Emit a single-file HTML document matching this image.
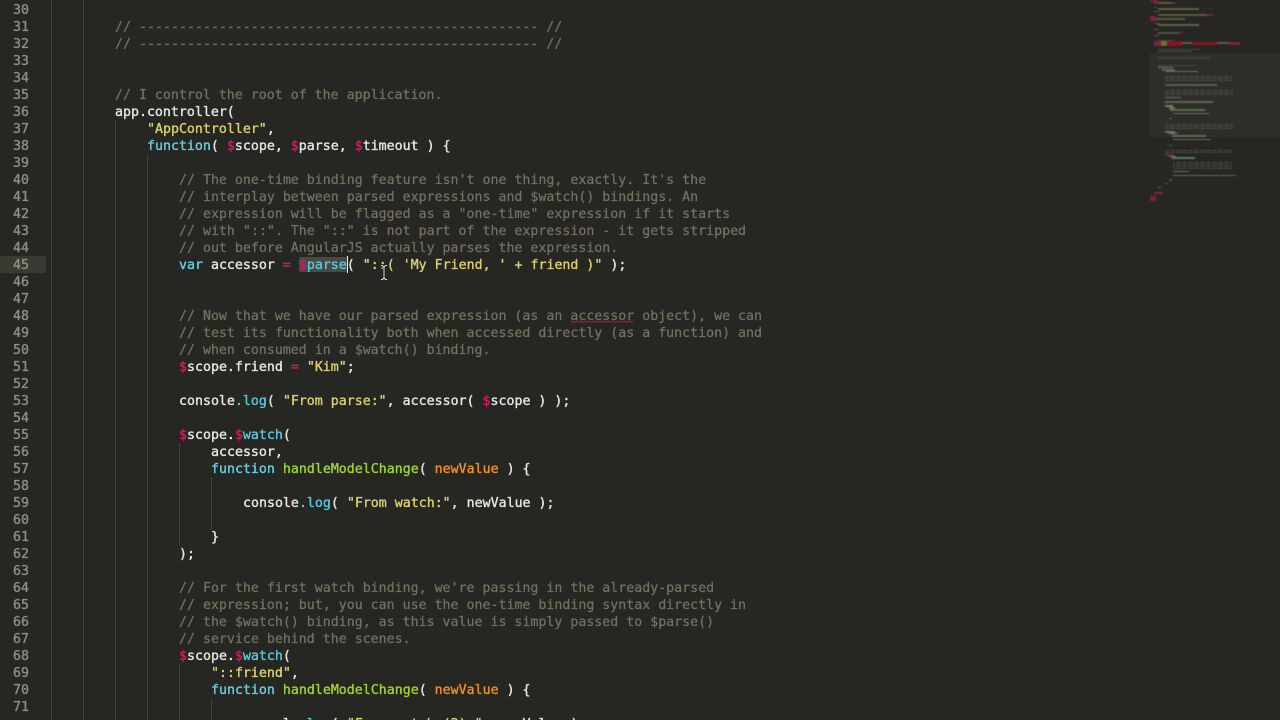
<!DOCTYPE html>
<html><head><meta charset="utf-8"><style>
html,body{margin:0;padding:0;background:#262622;width:1280px;height:720px;overflow:hidden}
#e{position:relative;width:1280px;height:720px;overflow:hidden;font-family:"DejaVu Sans Mono","Liberation Mono",monospace;font-size:13.28px;line-height:17px;color:#e8e8e2;filter:blur(.35px)}
.l{position:absolute;left:115px;white-space:pre;height:17px;transform:translateY(1px);-webkit-text-stroke:.35px}
.n{position:absolute;left:0;width:29px;text-align:right;color:#8f8f88;height:17px;transform:translateY(1px);-webkit-text-stroke:.35px}
.g{position:absolute;width:1px;background:#41413c}
.c{color:#75715e;-webkit-text-stroke:.25px}.k{color:#66d0e4}.s{color:#dcd070}.d{color:#d41a66}.f{color:#9ed62e}.o{color:#f0921f}.y{color:#d41a66}.m{color:#5cc8dc}
</style></head><body><div id="e">
<div style="position:absolute;left:0;top:256px;width:46px;height:17px;background:#3a3a32"></div>
<div class="g" style="left:51px;top:0;height:720px"></div>
<div class="g" style="left:83px;top:0;height:720px"></div>
<div class="g" style="left:115px;top:120px;height:600px"></div>
<div class="g" style="left:147px;top:154px;height:566px"></div>
<div class="g" style="left:179px;top:443px;height:103px"></div>
<div class="g" style="left:211px;top:477px;height:52px"></div>
<div class="g" style="left:179px;top:664px;height:56px"></div>
<div class="g" style="left:211px;top:698px;height:22px"></div>
<div style="position:absolute;left:299px;top:257px;width:48px;height:15px;background:#4a4a45;border-radius:2px"></div>
<div style="position:absolute;left:347px;top:256px;width:1px;height:17px;background:#f0f0ea"></div>
<div class="n" style="top:1px">30</div>
<div class="n" style="top:18px">31</div>
<div class="n" style="top:35px">32</div>
<div class="n" style="top:52px">33</div>
<div class="n" style="top:69px">34</div>
<div class="n" style="top:86px">35</div>
<div class="n" style="top:103px">36</div>
<div class="n" style="top:120px">37</div>
<div class="n" style="top:137px">38</div>
<div class="n" style="top:154px">39</div>
<div class="n" style="top:171px">40</div>
<div class="n" style="top:188px">41</div>
<div class="n" style="top:205px">42</div>
<div class="n" style="top:222px">43</div>
<div class="n" style="top:239px">44</div>
<div class="n" style="top:256px">45</div>
<div class="n" style="top:273px">46</div>
<div class="n" style="top:290px">47</div>
<div class="n" style="top:307px">48</div>
<div class="n" style="top:324px">49</div>
<div class="n" style="top:341px">50</div>
<div class="n" style="top:358px">51</div>
<div class="n" style="top:375px">52</div>
<div class="n" style="top:392px">53</div>
<div class="n" style="top:409px">54</div>
<div class="n" style="top:426px">55</div>
<div class="n" style="top:443px">56</div>
<div class="n" style="top:460px">57</div>
<div class="n" style="top:477px">58</div>
<div class="n" style="top:494px">59</div>
<div class="n" style="top:511px">60</div>
<div class="n" style="top:528px">61</div>
<div class="n" style="top:545px">62</div>
<div class="n" style="top:562px">63</div>
<div class="n" style="top:579px">64</div>
<div class="n" style="top:596px">65</div>
<div class="n" style="top:613px">66</div>
<div class="n" style="top:630px">67</div>
<div class="n" style="top:647px">68</div>
<div class="n" style="top:664px">69</div>
<div class="n" style="top:681px">70</div>
<div class="n" style="top:698px">71</div>
<div class="l c" style="top:18px">// -------------------------------------------------- //</div>
<div class="l c" style="top:35px">// -------------------------------------------------- //</div>
<div class="l c" style="top:86px">// I control the root of the application.</div>
<div class="l" style="top:103px">app.controller(</div>
<div class="l s" style="left:147px;top:120px">"AppController"<span style="color:#e8e8e2">,</span></div>
<div class="l" style="left:147px;top:137px"><span class="k">function</span>( <span class="d">$</span>scope, <span class="d">$</span>parse, <span class="d">$</span>timeout ) {</div>
<div class="l c" style="left:179px;top:171px">// The one-time binding feature isn't one thing, exactly. It's the</div>
<div class="l c" style="left:179px;top:188px">// interplay between parsed expressions and $watch() bindings. An</div>
<div class="l c" style="left:179px;top:205px">// expression will be flagged as a "one-time" expression if it starts</div>
<div class="l c" style="left:179px;top:222px">// with "::". The "::" is not part of the expression - it gets stripped</div>
<div class="l c" style="left:179px;top:239px">// out before AngularJS actually parses the expression.</div>
<div class="l" style="left:179px;top:256px"><span class="k">var</span> accessor <span class="y">=</span> <span class="d">$</span><span class="m">parse</span>( <span class="s">"::( 'My Friend, ' + friend )"</span> );</div>
<div class="l c" style="left:179px;top:307px">// Now that we have our parsed expression (as an accessor object), we can</div>
<div class="l c" style="left:179px;top:324px">// test its functionality both when accessed directly (as a function) and</div>
<div class="l c" style="left:179px;top:341px">// when consumed in a $watch() binding.</div>
<div class="l" style="left:179px;top:358px"><span class="d">$</span>scope.friend <span class="y">=</span> <span class="s">"Kim"</span>;</div>
<div class="l" style="left:179px;top:392px">console<span class="m">.log</span>( <span class="s">"From parse:"</span>, accessor( <span class="d">$</span>scope ) );</div>
<div class="l" style="left:179px;top:426px"><span class="d">$</span>scope.<span class="d">$</span><span class="m">watch</span>(</div>
<div class="l" style="left:211px;top:443px">accessor,</div>
<div class="l" style="left:211px;top:460px"><span class="k">function</span> <span class="f">handleModelChange</span>( <span class="o">newValue</span> ) {</div>
<div class="l" style="left:243px;top:494px">console<span class="m">.log</span>( <span class="s">"From watch:"</span>, newValue );</div>
<div class="l" style="left:211px;top:528px">}</div>
<div class="l" style="left:179px;top:545px">);</div>
<div class="l c" style="left:179px;top:579px">// For the first watch binding, we're passing in the already-parsed</div>
<div class="l c" style="left:179px;top:596px">// expression; but, you can use the one-time binding syntax directly in</div>
<div class="l c" style="left:179px;top:613px">// the $watch() binding, as this value is simply passed to $parse()</div>
<div class="l c" style="left:179px;top:630px">// service behind the scenes.</div>
<div class="l" style="left:179px;top:647px"><span class="d">$</span>scope.<span class="d">$</span><span class="m">watch</span>(</div>
<div class="l s" style="left:211px;top:664px">"::friend"<span style="color:#e8e8e2">,</span></div>
<div class="l" style="left:211px;top:681px"><span class="k">function</span> <span class="f">handleModelChange</span>( <span class="o">newValue</span> ) {</div>
<div class="l" style="left:243px;top:715px">console<span class="m">.log</span>( <span class="s">"From watch (2):"</span>, newValue );</div>
<svg style="position:absolute;left:0;top:0" width="1280" height="720" fill="none">
<defs><pattern id="r" width="6" height="2" patternUnits="userSpaceOnUse"><rect width="5" height="1" fill="#5c5c50"/></pattern></defs>
<path d="M571 322.5l2-1.5 2 1.5 2-1.5 2 1.5 2-1.5 2 1.5 2-1.5 2 1.5 2-1.5 2 1.5 2-1.5 2 1.5 2-1.5 2 1.5 2-1.5 2 1.5 2-1.5 2 1.5 2-1.5 2 1.5 2-1.5 2 1.5 2-1.5 2 1.5 2-1.5 2 1.5 2-1.5 2 1.5 2-1.5 2 1.5 2-1.5" stroke="#a0203c" stroke-width="1"/>
<path d="M381 265.5c1.500 0 2.500 .5 3 1.500c.5-1 1.500-1.500 3-1.500M384 267v11M381 279.500c1.500 0 2.500-.5 3-1.500c.5 1 1.500 1.500 3 1.500" stroke="#111" stroke-width="2.400"/>
<path d="M381 265.500c1.500 0 2.500 .5 3 1.500c.5-1 1.500-1.500 3-1.500M384 267v11M381 279.500c1.500 0 2.500-.5 3-1.500c.5 1 1.500 1.500 3 1.500" stroke="#f4f4f4" stroke-width="1"/>
<rect x="1150" y="53" width="130" height="84" fill="#2d2d29"/>
<g opacity=".72" style="filter:blur(.6px)">
<rect x="1150" y="0" width="8" height="2" fill="#a02050"/>
<rect x="1154" y="2" width="22" height="2" fill="#707038"/><rect x="1154" y="2" width="4" height="2" fill="#a02050"/><rect x="1172" y="2" width="4" height="2" fill="#a02050"/>
<rect x="1154" y="7" width="3" height="1" fill="#666"/>
<rect x="1158" y="8" width="41" height="2" fill="#77775a"/>
<rect x="1154" y="11" width="6" height="1" fill="#666"/>
<rect x="1158" y="14" width="50" height="2" fill="#707045"/><rect x="1207" y="14" width="6" height="2" fill="#a02050"/>
<rect x="1150" y="16" width="6" height="5" fill="#a02050"/>
<rect x="1156" y="18" width="29" height="2" fill="#707045"/>
<rect x="1154" y="23" width="6" height="1" fill="#666"/>
<rect x="1158" y="24" width="41" height="2" fill="#77775a"/>
<rect x="1154" y="29" width="5" height="1" fill="#666"/>
<rect x="1158" y="32" width="20" height="2" fill="#666650"/><rect x="1178" y="32" width="4" height="2" fill="#a02050"/>
<rect x="1154" y="35" width="5" height="1" fill="#666"/>
<rect x="1158" y="40" width="16" height="1" fill="#555548"/>
<rect x="1154" y="41" width="7" height="5" fill="#a02050"/>
<rect x="1161" y="41" width="6" height="5" fill="#85903a"/>
<rect x="1167" y="41" width="15" height="5" fill="#a81020"/>
<rect x="1182" y="42" width="10" height="2" fill="#77775a"/>
<rect x="1192" y="42" width="25" height="3" fill="#a81020"/>
<rect x="1217" y="42" width="11" height="2" fill="#77775a"/>
<rect x="1228" y="42" width="12" height="3" fill="#a02050"/>
<rect x="1158" y="49" width="42" height="1" fill="#555548"/>
<rect x="1158" y="51" width="34" height="1" fill="#666650"/>
<rect x="1158" y="57" width="52" height="2" fill="#4a4a40"/>
<rect x="1158" y="65" width="38" height="1" fill="#55554a"/>
<rect x="1158" y="67" width="15" height="1" fill="#999"/>
<rect x="1162" y="69" width="13" height="2" fill="#808040"/>
<rect x="1166" y="71" width="32" height="1" fill="#888"/>
<rect x="1165" y="75" width="67" height="7" fill="url(#r)"/>
<rect x="1165" y="84" width="52" height="2" fill="#707058"/>
<rect x="1165" y="90" width="68" height="5" fill="url(#r)"/>
<rect x="1212" y="90" width="8" height="1" fill="#a02050"/>
<rect x="1165" y="97" width="16" height="1" fill="#888"/>
<rect x="1165" y="101" width="48" height="2" fill="#777760"/>
<rect x="1165" y="105" width="8" height="2" fill="#999"/>
<rect x="1169" y="107" width="6" height="2" fill="#888"/>
<rect x="1170" y="109" width="35" height="2" fill="#6a8a4a"/>
<rect x="1173" y="113" width="36" height="1" fill="#888870"/>
<rect x="1169" y="118" width="3" height="1" fill="#777"/>
<rect x="1165" y="123" width="68" height="7" fill="url(#r)"/>
<rect x="1165" y="131" width="10" height="2" fill="#888"/>
<rect x="1169" y="133" width="9" height="1" fill="#999"/>
<rect x="1172" y="135" width="34" height="2" fill="#6a8a5a"/>
<rect x="1173" y="139" width="38" height="1" fill="#888870"/>
<rect x="1169" y="145" width="3" height="1" fill="#777"/>
<rect x="1165" y="149" width="67" height="4" fill="url(#r)"/>
<rect x="1165" y="154" width="8" height="2" fill="#903050"/>
<rect x="1169" y="156" width="7" height="1" fill="#999"/>
<rect x="1172" y="157" width="23" height="2" fill="#6a9a70"/>
<rect x="1173" y="161" width="59" height="9" fill="url(#r)"/>
<rect x="1173" y="171" width="16" height="1" fill="#888"/>
<rect x="1173" y="175" width="44" height="1" fill="#888870"/>
<rect x="1217" y="175" width="19" height="1" fill="#777"/>
<rect x="1169" y="179" width="3" height="2" fill="#3a5aa0"/>
<rect x="1165" y="183" width="3" height="1" fill="#777"/>
<rect x="1158" y="187" width="3" height="1" fill="#777"/>
<rect x="1154" y="192" width="9" height="2" fill="#903050"/>
<rect x="1150" y="196" width="6" height="5" fill="#a02050"/>
</g></svg>
</div></body></html>
